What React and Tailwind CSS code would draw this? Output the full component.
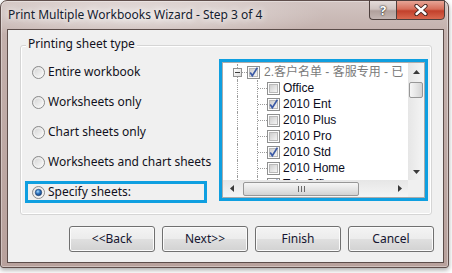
import React from "react";

function Radio({ checked }) {
  return (
    <svg width="13" height="13" viewBox="0 0 13 13" className="shrink-0">
      <defs>
        <linearGradient id="rg" x1="0" y1="0" x2="1" y2="1">
          <stop offset="0" stopColor="#cfcfcf" />
          <stop offset="1" stopColor="#ffffff" />
        </linearGradient>
        <radialGradient id="rd" cx="0.4" cy="0.35" r="0.75">
          <stop offset="0" stopColor="#a9dcff" />
          <stop offset="0.45" stopColor="#2f74c0" />
          <stop offset="1" stopColor="#0f3a72" />
        </radialGradient>
      </defs>
      <circle cx="6.5" cy="6.5" r="6" fill="url(#rg)" stroke="#8a8b8b" />
      <circle cx="6.5" cy="6.5" r="4.6" fill="none" stroke="#f6f6f6" strokeWidth="0.8" />
      {checked && <circle cx="6.5" cy="6.5" r="3.2" fill="url(#rd)" stroke="#1b3c6c" strokeWidth="0.6" />}
    </svg>
  );
}

function Check({ checked }) {
  return (
    <svg width="13" height="13" viewBox="0 0 13 13" className="shrink-0 overflow-visible">
      <defs>
        <linearGradient id="cg" x1="0" y1="0" x2="1" y2="1">
          <stop offset="0" stopColor="#cbcbcb" />
          <stop offset="1" stopColor="#f7f7f7" />
        </linearGradient>
      </defs>
      <rect x="0.5" y="0.5" width="12" height="12" fill="#fdfdfd" stroke="#8e8f8f" />
      <rect x="2.5" y="2.5" width="8" height="8" fill="url(#cg)" stroke="#b9b9b9" />
      {checked && (
        <path d="M3.2 6.6 L5.3 9.6 L10.4 1.6" fill="none" stroke="#3b5aa6" strokeWidth="1.7" strokeLinejoin="miter" />
      )}
    </svg>
  );
}

function Arrow({ dir }) {
  const d = {
    up: "M0 4 L3.5 0 L7 4 Z",
    down: "M0 0 L7 0 L3.5 4 Z",
    left: "M4 0 L4 7 L0 3.5 Z",
    right: "M0 0 L4 3.5 L0 7 Z",
  }[dir];
  const vert = dir === "up" || dir === "down";
  return (
    <svg width={vert ? 7 : 4} height={vert ? 4 : 7} viewBox={vert ? "0 0 7 4" : "0 0 4 7"}>
      <path d={d} fill="#3a3a3a" />
    </svg>
  );
}

const dot = "border-dotted border-[#9c9c9c]";

function RootRow() {
  return (
    <div className="flex h-[16px] items-center">
      <div className="relative ml-[4px] h-full w-[20px] shrink-0">
        <div className={`absolute left-[10px] top-0 bottom-0 border-l ${dot}`} />
        <div className={`absolute left-[15px] right-0 top-[8px] border-t ${dot}`} />
        <div className="absolute left-[6px] top-[4px] flex h-[9px] w-[9px] items-center justify-center border border-[#919191] bg-[linear-gradient(135deg,#ffffff,#dcdcdc)]">
          <div className="h-[1px] w-[5px] bg-[#3d3d3d]" />
        </div>
      </div>
      <Check checked />
      <span className="ml-[4px] whitespace-nowrap text-[12px] leading-[16px] text-[#7a7a7a] font-['Liberation_Sans','Noto_Sans_CJK_SC',sans-serif]">
        2.客户名单 - 客服专用 - 已
      </span>
    </div>
  );
}

function ChildRow({ label, checked }) {
  return (
    <div className="flex h-[16px] items-center">
      <div className="relative ml-[4px] h-full w-[20px] shrink-0">
        <div className={`absolute left-[10px] top-0 bottom-0 border-l ${dot}`} />
      </div>
      <div className="relative h-full w-[20px] shrink-0">
        <div className={`absolute left-[10px] top-0 bottom-0 border-l ${dot}`} />
        <div className={`absolute left-[11px] right-0 top-[8px] border-t ${dot}`} />
      </div>
      <Check checked={checked} />
      <span className="ml-[3px] whitespace-nowrap text-[12px] leading-[16px] text-[#0c0c1c] font-['Liberation_Sans',sans-serif]">
        {label}
      </span>
    </div>
  );
}

function Option({ label }) {
  return (
    <div className="flex h-[30px] items-center gap-[3px]">
      <Radio />
      <span className="text-[12px] leading-[16px] text-[#101020]">{label}</span>
    </div>
  );
}

function Btn({ children }) {
  return (
    <button className="flex h-[26px] w-[86px] items-center justify-center rounded-[3px] border border-[#707070] bg-[linear-gradient(180deg,#f4f4f4_0%,#ececec_48%,#dfdfdf_52%,#d2d2d2_100%)] text-[12px] leading-[16px] text-[#151530] shadow-[inset_0_0_0_1px_#fbfbfb]">
      {children}
    </button>
  );
}

export default function App() {
  const children = [
    ["Office", false],
    ["2010 Ent", true],
    ["2010 Plus", false],
    ["2010 Pro", false],
    ["2010 Std", true],
    ["2010 Home", false],
    ["Tab Office", true],
  ];
  return (
    <div className="h-[273px] w-[452px] bg-white font-['Noto_Sans',sans-serif]">
      <div className="flex h-[268px] w-[449px] flex-col rounded-t-[7px] rounded-b-[3px] border border-[#5f4e4b] bg-[radial-gradient(ellipse_190px_26px_at_135px_15px,rgba(255,255,255,0.55),rgba(255,255,255,0)),linear-gradient(180deg,#d2c5c2_0%,#c3b0ac_12%,#b8a19c_100%)] shadow-[0_2px_5px_rgba(0,0,0,0.35),inset_0_0_0_1px_rgba(255,255,255,0.35)]">
        <div className="flex h-[28px] shrink-0 items-start">
          <span className="ml-[7px] mt-[6px] text-[12px] leading-[16px] text-[#14202e] [text-shadow:0_0_6px_rgba(255,255,255,0.95),0_0_10px_rgba(255,255,255,0.8)]">
            Print Multiple Workbooks Wizard - Step 3 of 4
          </span>
          <div className="-mt-[1px] ml-auto mr-[3px] flex h-[20px]">
            <div className="flex w-[27px] items-center justify-center rounded-bl-[4px] border border-r-0 border-[#4d3f3d] bg-[linear-gradient(180deg,#e4dbd9_0%,#cfc3c0_45%,#b1a09c_55%,#c3b5b2_100%)] text-[13px] font-bold leading-none text-white [text-shadow:0_0_2px_#2b2b2b,0_0_1px_#000]">
              ?
            </div>
            <div className="flex w-[49px] items-center justify-center rounded-br-[4px] border border-[#4d3f3d] bg-[linear-gradient(180deg,#e6a596_0%,#d66e5a_45%,#c2402b_55%,#d9684f_100%)]">
              <svg width="14" height="12" viewBox="0 0 14 12">
                <path d="M2.5 2 L11.5 10 M11.5 2 L2.5 10" stroke="#3a1f1a" strokeWidth="4.2" strokeLinecap="round" />
                <path d="M2.5 2 L11.5 10 M11.5 2 L2.5 10" stroke="#ffffff" strokeWidth="2.4" strokeLinecap="round" />
              </svg>
            </div>
          </div>
        </div>

        <div className="ml-[6px] flex h-[234px] w-[437px] shrink-0 flex-col border border-[#5c4d4a] bg-[#f0f0f0]">
          <div className="relative ml-[12px] mt-[15px] flex h-[170px] w-[412px] rounded-[3px] border border-[#d5d5d5] shadow-[inset_0_0_0_1px_#ffffff]">
            <span className="absolute -top-[10px] left-[5px] bg-[#f0f0f0] px-[2px] text-[12px] leading-[16px] text-[#101020]">
              Printing sheet type
            </span>
            <div className="flex flex-1 flex-col pl-[11px] pt-[11px]">
              <Option label="Entire workbook" />
              <Option label="Worksheets only" />
              <Option label="Chart sheets only" />
              <Option label="Worksheets and chart sheets" />
              <div className="flex h-[30px] items-center">
                <div className="-ml-[7px] flex h-[22px] w-[182px] items-center gap-[3px] border-[3px] border-[#0f9fe0] pl-[4px]">
                  <Radio checked />
                  <span className="text-[12px] leading-[16px] text-[#101020]">Specify sheets:</span>
                </div>
              </div>
            </div>
            <div className="mr-[3px] mt-[13px] h-[142px] w-[209px] shrink-0 border-[3px] border-[#0f9fe0]">
              <div className="flex h-full flex-col border border-[#acacac] bg-white">
                <div className="flex h-[117px]">
                  <div className="flex-1 overflow-hidden pt-[1px]">
                    <RootRow />
                    {children.map(([l, c]) => (
                      <ChildRow key={l} label={l} checked={c} />
                    ))}
                  </div>
                  <div className="flex w-[16px] flex-col bg-[linear-gradient(90deg,#e6e6e6,#f5f5f5)]">
                    <div className="flex h-[17px] items-center justify-center">
                      <Arrow dir="up" />
                    </div>
                    <div className="mx-auto mt-[2px] h-[16px] w-[14px] rounded-[2px] border border-[#979797] bg-[linear-gradient(90deg,#f6f6f6,#e2e2e2_60%,#d3d3d3)]" />
                    <div className="flex-1" />
                    <div className="flex h-[17px] items-center justify-center">
                      <Arrow dir="down" />
                    </div>
                  </div>
                </div>
                <div className="flex h-[17px]">
                  <div className="flex flex-1 items-center bg-[linear-gradient(180deg,#e6e6e6,#f5f5f5)]">
                    <div className="flex w-[17px] justify-center">
                      <Arrow dir="left" />
                    </div>
                    <div className="ml-[3px] flex h-[14px] w-[116px] items-center justify-center gap-[2px] rounded-[2px] border border-[#979797] bg-[linear-gradient(180deg,#f6f6f6,#e2e2e2_60%,#d3d3d3)]">
                      <div className="h-[6px] w-[1px] bg-[#6a6a6a]" />
                      <div className="h-[6px] w-[1px] bg-[#6a6a6a]" />
                      <div className="h-[6px] w-[1px] bg-[#6a6a6a]" />
                    </div>
                    <div className="flex-1" />
                    <div className="flex w-[17px] justify-center">
                      <Arrow dir="right" />
                    </div>
                  </div>
                  <div className="w-[16px] bg-[#f0f0f0]" />
                </div>
              </div>
            </div>
          </div>

          <div className="mr-[9px] mt-[11px] flex justify-end gap-[7px]">
            <Btn>&lt;&lt;Back</Btn>
            <Btn>Next&gt;&gt;</Btn>
            <Btn>Finish</Btn>
            <Btn>Cancel</Btn>
          </div>
        </div>
      </div>
    </div>
  );
}
